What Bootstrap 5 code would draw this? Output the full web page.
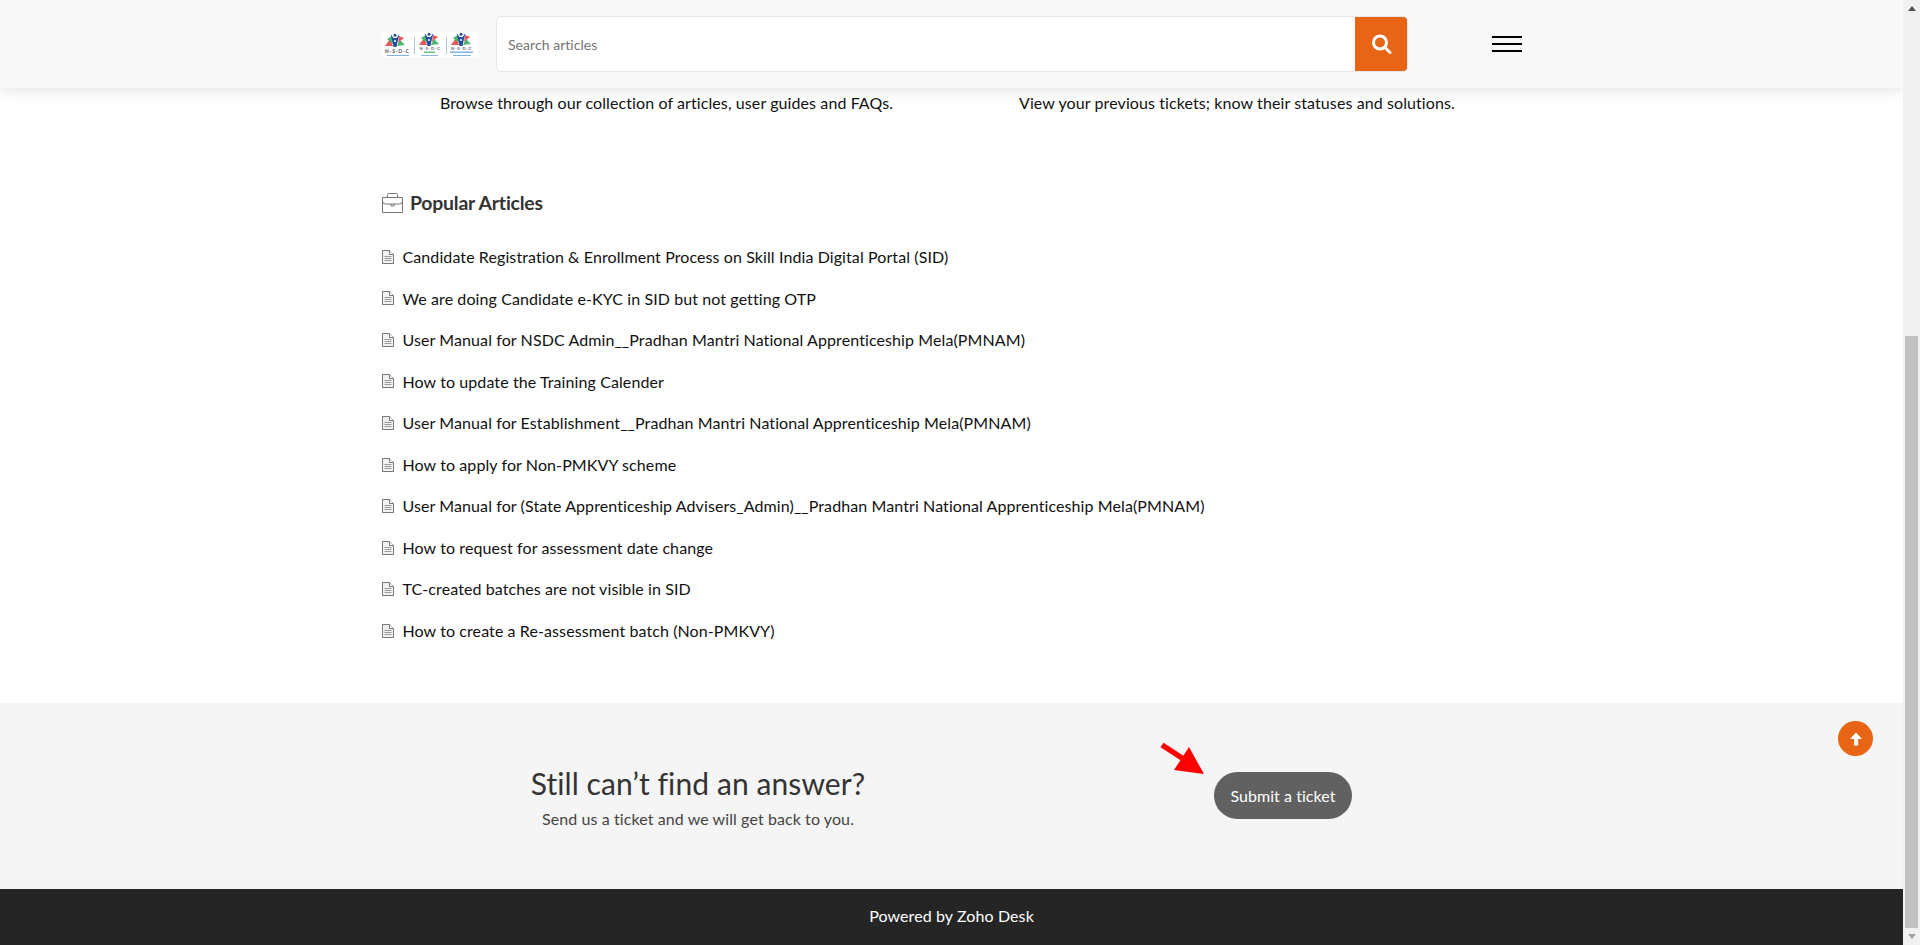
<!DOCTYPE html>
<html lang="en"><head><meta charset="utf-8"><title>Help Center</title>
<link rel="stylesheet" href="https://cdn.jsdelivr.net/npm/bootstrap@5.3.0/dist/css/bootstrap.min.css">
<style>
html,body{height:945px;overflow:hidden}
body{font-family:Lato,"Liberation Sans",sans-serif;color:#000;background:#fff}
.shell{height:945px}
.pagecol{width:1903px;height:945px}
.topbar{height:88px;background:#f8f8f8;box-shadow:0 2px 14px rgba(0,0,0,.12);z-index:5}
.wrap{width:1156px;margin-left:382px}
.logoimg{width:96px;height:25px;margin-right:18px}
.searchbox{width:912px;height:56px;border:1px solid #e6e6e6;border-radius:5px;background:#fff;overflow:hidden}
.searchbox input{border:0;outline:0;padding:0 11px;font:14px Lato,sans-serif;letter-spacing:.05px;color:#555;background:transparent}
.searchbox input::placeholder{color:#757575;opacity:1}
.searchbtn{width:52px;background:#e86515;border:0;padding:0}
.burger{width:30px;margin-left:84px}
.burger i{display:block;height:2px;background:#000;margin-bottom:5px}
.burger i:last-child{margin-bottom:0}
.lead-row{height:33px;font-size:16px;line-height:30px;letter-spacing:.095px;color:#111}
.lead-a{margin-left:58px;width:579px}
.pop-head{margin-top:68px;height:28px;font-size:19.4px;font-weight:700;color:#333;line-height:28px;letter-spacing:-.2px;gap:7px}
.pop-list{margin-top:19px}
.pop-item{height:41.55px;font-size:16px;line-height:41.55px;letter-spacing:.095px;color:#111;text-decoration:none}
.docico{margin-right:8.500px;flex:none}
.cta{height:186px;background:#f5f5f5;margin-top:-3px}
.cta-left{width:518px;margin-left:439px;text-align:center}
.cta-title{font-size:30px;font-weight:400;color:#333;line-height:36px;letter-spacing:.09px;margin:0 0 8px}
.cta-sub{font-size:16px;color:#444;line-height:20px;letter-spacing:.09px;margin:0}
.cta-btn{width:138px;height:47px;background:#616161;color:#fff;border-radius:24px;font-size:16px;letter-spacing:.05px;border:0;outline:0;padding:0;margin-top:7px;margin-left:257px}
.cta-inner{height:100%;padding-top:62px}
.cta-arrow{position:absolute;left:203px;top:-23px;width:46px;height:34px}
.foot{height:56px;background:#252525;color:#fff;font-size:16px;line-height:54px;letter-spacing:.1px}
.totop{position:absolute;left:1838px;top:721px;width:35px;height:35px;border-radius:50%;background:#e86515;z-index:6;border:0;padding:0}
.rail{width:17px;height:945px;background:#f1f1f1;position:relative}
.railcap{height:17px}
.railtrack{height:911px;padding-top:319px}
.railthumb{width:13px;height:592px;background:#c1c1c1;margin-left:2px}
</style></head><body>
<svg width="0" height="0" class="position-absolute" aria-hidden="true"><defs>
 <symbol id="docsym" viewBox="0 0 12 14"><path d="M.5.5h7l4 4v9H.5z" fill="#f2f2f2" stroke="#777"/><path d="M7.500.500v4h4" fill="#fff" stroke="#777"/><path d="M2.500 6.500h7M2.500 8.500h7M2.500 10.500h7" fill="none" stroke="#999"/></symbol>
 <g id="fan"><path d="M-10 13l5-7 3 7z" fill="#e8575c"/><path d="M-8 6l5-3 1 8z" fill="#4bb56b"/><path d="M9 5l-5-2-1 7z" fill="#e8575c"/><path d="M10 12l-5-5-3 6z" fill="#4bb56b"/><path d="M-4.500 1L-1.500 5h3L4.500 1 2.500 9l-1 5h-3l-1-5z" fill="#24509a"/><circle cx="0" cy="2.200" r="1.500" fill="#24509a"/><circle cx="0" cy="8" r="1" fill="#fff"/></g>
</defs></svg>
<div class="shell d-flex position-relative">
<div class="pagecol d-flex flex-column position-relative overflow-hidden">
 <header class="topbar flex-shrink-0 position-relative">
  <div class="wrap d-flex align-items-center h-100">
   <svg class="logoimg flex-shrink-0" viewBox="0 0 96 25" role="img" aria-label="NSDC">
    <rect width="96" height="25" fill="#fff"/>
    <use href="#fan" x="13" y="1"/>
    <text x="3" y="21" font-size="5" font-family="Lato" font-weight="700" fill="#555" letter-spacing="1">N·S·D·C</text>
    <rect x="5" y="23" width="22" height="1" fill="#7fb3dd"/>
    <rect x="32" y="5" width="1" height="17" fill="#a9c6e4"/>
    <use href="#fan" x="47" y="0"/>
    <text x="37.500" y="18" font-size="4.200" font-family="Lato" font-weight="700" fill="#666" letter-spacing=".9">N·S·D·C</text>
    <rect x="42" y="19.500" width="11" height="1.500" fill="#6dbd7d"/><rect x="39" y="23" width="17" height="1" fill="#8dbbe0"/>
    <rect x="64" y="5" width="1" height="17" fill="#a9c6e4"/>
    <use href="#fan" x="79" y="0"/>
    <text x="69" y="18" font-size="4.200" font-family="Lato" font-weight="700" fill="#666" letter-spacing=".9">N·S·D·C</text>
    <rect x="68" y="19.500" width="23" height="1.500" fill="#7fb3dd"/><rect x="71" y="23" width="18" height="1" fill="#7fb3dd"/>
   </svg>
   <div class="searchbox d-flex flex-shrink-0">
    <input class="flex-grow-1" type="text" placeholder="Search articles" aria-label="Search articles">
    <button class="searchbtn d-flex align-items-center justify-content-center" aria-label="Search"><svg width="22" height="22" viewBox="0 0 22 22" fill="none" stroke="#fff"><circle cx="10" cy="9.500" r="6.500" stroke-width="3"/><path d="M15 14.500l5 5" stroke-width="3" stroke-linecap="round"/></svg></button>
   </div>
   <div class="burger"><i></i><i></i><i></i></div>
  </div>
 </header>
 <main class="flex-grow-1">
  <div class="wrap">
   <div class="lead-row d-flex"><div class="lead-a">Browse through our collection of articles, user guides and FAQs.</div><div>View your previous tickets; know their statuses and solutions.</div></div>
   <div class="pop-head d-flex align-items-center">
    <svg width="21" height="20" viewBox="0 0 21 20" fill="none" stroke="#777"><path d="M.5 4.500h20v15H.5z"/><path d="M.5 5v3q0 3 3 3h14q3 0 3-3V5"/><path d="M5.500 4.500v-3q0-1 1-1h8q1 0 1 1v3M9 11v2h3v-2"/></svg>
    <span>Popular Articles</span>
   </div>
   <div class="pop-list">
    <a class="pop-item d-flex align-items-center" href="#"><svg class="docico" width="12" height="14"><use href="#docsym"/></svg>Candidate Registration &amp; Enrollment Process on Skill India Digital Portal (SID)</a>
    <a class="pop-item d-flex align-items-center" href="#"><svg class="docico" width="12" height="14"><use href="#docsym"/></svg>We are doing Candidate e-KYC in SID but not getting OTP</a>
    <a class="pop-item d-flex align-items-center" href="#"><svg class="docico" width="12" height="14"><use href="#docsym"/></svg>User Manual for NSDC Admin__Pradhan Mantri National Apprenticeship Mela(PMNAM)</a>
    <a class="pop-item d-flex align-items-center" href="#"><svg class="docico" width="12" height="14"><use href="#docsym"/></svg>How to update the Training Calender</a>
    <a class="pop-item d-flex align-items-center" href="#"><svg class="docico" width="12" height="14"><use href="#docsym"/></svg>User Manual for Establishment__Pradhan Mantri National Apprenticeship Mela(PMNAM)</a>
    <a class="pop-item d-flex align-items-center" href="#"><svg class="docico" width="12" height="14"><use href="#docsym"/></svg>How to apply for Non-PMKVY scheme</a>
    <a class="pop-item d-flex align-items-center" href="#"><svg class="docico" width="12" height="14"><use href="#docsym"/></svg>User Manual for (State Apprenticeship Advisers_Admin)__Pradhan Mantri National Apprenticeship Mela(PMNAM)</a>
    <a class="pop-item d-flex align-items-center" href="#"><svg class="docico" width="12" height="14"><use href="#docsym"/></svg>How to request for assessment date change</a>
    <a class="pop-item d-flex align-items-center" href="#"><svg class="docico" width="12" height="14"><use href="#docsym"/></svg>TC-created batches are not visible in SID</a>
    <a class="pop-item d-flex align-items-center" href="#"><svg class="docico" width="12" height="14"><use href="#docsym"/></svg>How to create a Re-assessment batch (Non-PMKVY)</a>
   </div>
  </div>
 </main>
 <section class="cta flex-shrink-0">
  <div class="cta-inner d-flex align-items-start">
   <div class="cta-left"><h2 class="cta-title">Still can’t find an answer?</h2><p class="cta-sub">Send us a ticket and we will get back to you.</p></div>
   <div class="position-relative">
    <button class="cta-btn">Submit a ticket</button>
    <svg class="cta-arrow" viewBox="0 0 46 34"><path d="M2 3L22 16" stroke="#f00" stroke-width="5.500" fill="none"/><path d="M29 5L44 32L14 28z" fill="#f00"/></svg>
   </div>
  </div>
 </section>
 <footer class="foot flex-shrink-0 text-center">Powered by Zoho Desk</footer>
 <button class="totop d-flex align-items-center justify-content-center" aria-label="Back to top"><svg width="14" height="14" viewBox="0 0 14 14" fill="#fff"><path d="M7 .5L13 7H9.200v6.500H5V7H1z"/></svg></button>
</div>
<div class="rail flex-shrink-0">
 <div class="railcap d-flex align-items-center justify-content-center"><svg width="8" height="5" viewBox="0 0 8 5"><path d="M4 0l4 5H0z" fill="#505050"/></svg></div>
 <div class="railtrack"><div class="railthumb"></div></div>
 <div class="railcap d-flex align-items-center justify-content-center"><svg width="8" height="5" viewBox="0 0 8 5"><path d="M4 5L0 0h8z" fill="#a3a3a3"/></svg></div>
</div>
</div>
<script src="https://cdn.jsdelivr.net/npm/bootstrap@5.3.0/dist/js/bootstrap.bundle.min.js"></script>
</body></html>
